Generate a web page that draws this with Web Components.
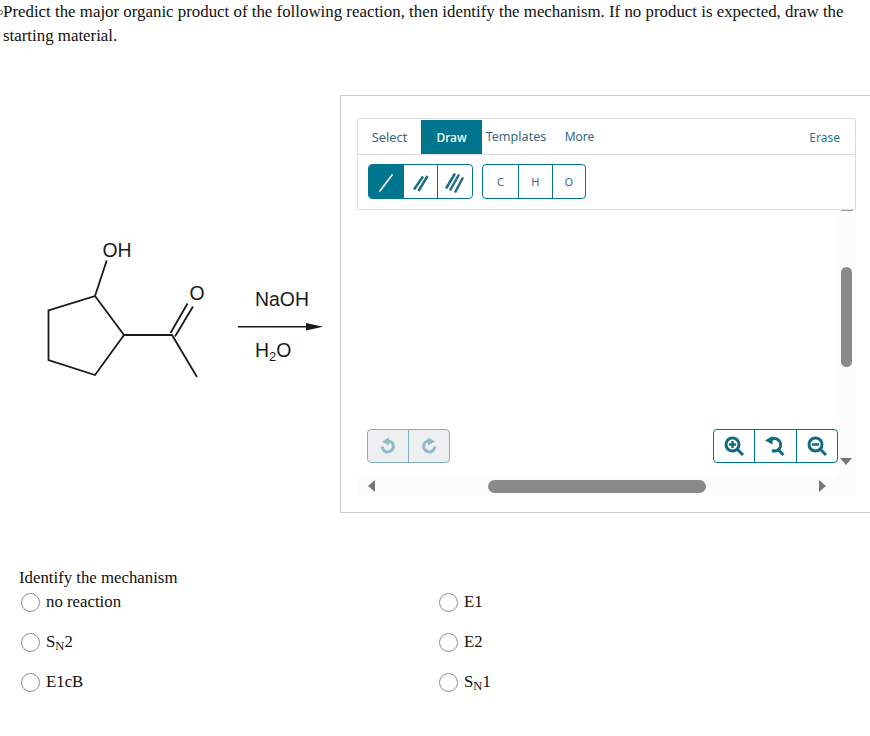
<!DOCTYPE html>
<html>
<head>
<meta charset="utf-8">
<title>Predict the product</title>
<style>
html,body{margin:0;padding:0;background:#fff;overflow:hidden}
body{width:870px;height:736px;font-family:"Liberation Serif","Times New Roman",serif;color:#111}
</style>
</head>
<body>
<question-page>
  <question-prompt>Predict the major organic product of the following reaction, then identify the mechanism. If no product is expected, draw the starting material.</question-prompt>
  <div style="display:flex;margin-top:48px">
    <reaction-figure></reaction-figure>
    <sketch-tool></sketch-tool>
  </div>
  <mechanism-list label="Identify the mechanism">
    <mech-option>no reaction</mech-option>
    <mech-option>E1</mech-option>
    <mech-option>S<sub>N</sub>2</mech-option>
    <mech-option>E2</mech-option>
    <mech-option>E1cB</mech-option>
    <mech-option>S<sub>N</sub>1</mech-option>
  </mechanism-list>
</question-page>

<script>
class QuestionPage extends HTMLElement {
  connectedCallback() {
    this.attachShadow({ mode: 'open' });
    this.shadowRoot.innerHTML = `
      <style>:host{display:block;width:870px;height:736px;overflow:hidden}</style>
      <slot></slot>`;
  }
}

class QuestionPrompt extends HTMLElement {
  connectedCallback() {
    this.attachShadow({ mode: 'open' });
    this.shadowRoot.innerHTML = `
      <style>
        :host{display:block;position:relative;padding:0 20px 0 3px;font-size:16.860px;line-height:24px;height:47px}
        .dot{position:absolute;left:-2px;top:10px;width:3px;height:3px;border:1px solid #555;border-radius:50%}
      </style>
      <span class="dot"></span><slot></slot>`;
  }
}

class ReactionFigure extends HTMLElement {
  connectedCallback() {
    this.attachShadow({ mode: 'open' });
    this.shadowRoot.innerHTML = `
      <style>
        :host{display:block;flex:0 0 340px;width:340px;height:418px}
        svg{display:block}
        text{font-family:"Liberation Sans",Arial,sans-serif;font-size:19.4px;fill:#1a1a1a}
        .b{fill:none;stroke:#1a1a1a;stroke-width:1.8}
      </style>
      <svg width="340" height="418" viewBox="0 95 340 418">
        <path class="b" d="M106.7 260.5L95 296L48.5 310.500V360L95 375L124 335L95 296M124 335H172L197 377"/>
        <path class="b" d="M170.500 333L187.500 303.500M175 336.500L193 306.500"/>
        <text x="117" y="256.500" text-anchor="middle">OH</text>
        <text x="197" y="299.500" text-anchor="middle">O</text>
        <text x="282" y="306" text-anchor="middle">NaOH</text>
        <text x="255" y="357">H<tspan font-size="13" dy="4">2</tspan><tspan dy="-4">O</tspan></text>
        <path d="M238 326.800H310" stroke="#1a1a1a" stroke-width="1.600" fill="none"/>
        <path d="M306 323L323 326.800L306 330.500Z" fill="#1a1a1a"/>
      </svg>`;
  }
}

class SketchTool extends HTMLElement {
  connectedCallback() {
    this.attachShadow({ mode: 'open' });
    this.shadowRoot.innerHTML = `
      <style>
        :host{display:block;flex:0 0 530px;width:530px;height:418px;box-sizing:border-box;
          border:1px solid #ccc;border-right:0;padding:22px 14px 16px 16px;
          font-family:"Noto Sans","Open Sans",sans-serif;color:#38687c}
        .toolbar{width:499px;box-sizing:border-box;border:1px solid #ddd;border-radius:3px 3px 0 0}
        .tabs{display:flex;align-items:stretch;height:35px;font-size:12px;border-bottom:1px solid #ddd;box-sizing:content-box}
        .tab{display:flex;align-items:center;justify-content:center}
        .select{width:63px;padding-top:1px;font-size:12.800px}
        .draw{width:61px;height:34px;margin-top:1px;background:#00758e;color:#fff;font-weight:500}
        .templates{width:68px;font-size:12.600px}
        .more{width:37px;margin-left:11px}
        .erase{margin-left:auto;margin-right:15px;padding-top:1px;color:#1a7b90}
        .tools{display:flex;gap:9px;height:54px;padding:9px 10px 0;box-sizing:border-box}
        .group{display:flex;height:35px;box-sizing:border-box;border:1px solid #00758e;border-radius:4px;overflow:hidden;background:#fff}
        .bonds{width:105px}
        .atoms{width:104px}
        .btn{flex:1 1 0;min-width:0;display:flex;align-items:center;justify-content:center;font-size:11px;color:#38687c;border-left:1px solid #00758e}
        .btn:first-child{border-left:0}
        .atoms .btn:first-child{flex:0 0 35px}
        .btn.on{background:#00758e}
        .area{display:grid;grid-template-columns:481px 18px;grid-template-rows:267px 19px;width:499px}
        .canvas{display:flex;align-items:flex-end;justify-content:space-between;padding:0 0 14px 10px;box-sizing:border-box}
        .canvas .group{height:34px}
        .undo{width:83px;border-color:#7fb0bc;background:#edeff0}
        .undo .btn{border-color:#7fb0bc}
        .zoom{width:125px}
        .vbar,.hbar{background:#fcfcfc;position:relative}
        .hbar{grid-column:1 / 3}
        .vthumb{position:absolute;left:3px;top:57px;width:11px;height:100px;border-radius:6px;background:#8a8a8a}
        .vtop{position:absolute;left:3px;top:0;width:12px;height:1px;background:#999}
        .vdown{position:absolute;left:2px;top:248px;width:0;height:0;border:6.500px solid transparent;border-top:7px solid #777;border-bottom:0}
        .hthumb{position:absolute;left:131px;top:3px;width:218px;height:13px;border-radius:7px;background:#8a8a8a}
        .hleft{position:absolute;left:11px;top:3px;width:0;height:0;border:6.500px solid transparent;border-right:7px solid #777;border-left:0}
        .hright{position:absolute;left:462px;top:3px;width:0;height:0;border:6.500px solid transparent;border-left:7px solid #777;border-right:0}
        svg{display:block}
      </style>
      <div class="toolbar">
        <div class="tabs">
          <div class="tab select">Select</div>
          <div class="tab draw">Draw</div>
          <div class="tab templates">Templates</div>
          <div class="tab more">More</div>
          <div class="tab erase">Erase</div>
        </div>
        <div class="tools">
          <div class="group bonds">
            <div class="btn on"><svg width="24" height="24" viewBox="0 0 24 24"><path d="M5.500 21.500L18.500 4.500" stroke="#fff" stroke-width="1.600"/></svg></div>
            <div class="btn"><svg width="24" height="24" viewBox="0 0 24 24"><path d="M5 19.500L14 6.500M9.500 21L18.500 6" stroke="#1f6f84" stroke-width="2.500"/></svg></div>
            <div class="btn"><svg width="24" height="24" viewBox="0 0 24 24"><path d="M3 18.500L12 3.500M7 20.500L16 4.500M12 22.500L20 7.500" stroke="#1f6f84" stroke-width="2.500"/></svg></div>
          </div>
          <div class="group atoms">
            <div class="btn">C</div>
            <div class="btn">H</div>
            <div class="btn">O</div>
          </div>
        </div>
      </div>
      <div class="area">
        <div class="canvas">
          <div class="group undo">
            <div class="btn"><svg width="18" height="18" viewBox="0 0 18 18"><path d="M6 4.500A5.600 5.600 0 1 1 3.200 9.500" fill="none" stroke="#8fbac6" stroke-width="3"/><path d="M10 0.500V8.500L3 4.500Z" fill="#8fbac6"/></svg></div>
            <div class="btn"><svg width="18" height="18" viewBox="0 0 18 18"><path d="M12 4.500A5.600 5.600 0 1 0 14.800 9.500" fill="none" stroke="#8fbac6" stroke-width="3"/><path d="M8 0.500V8.500L15 4.500Z" fill="#8fbac6"/></svg></div>
          </div>
          <div class="group zoom">
            <div class="btn"><svg width="22" height="22" viewBox="0 0 22 22"><circle cx="9.500" cy="9.500" r="6.500" fill="none" stroke="#0f6b80" stroke-width="3"/><path d="M14.500 14.500L20 20" stroke="#0f6b80" stroke-width="3"/><path d="M6 9.500H13M9.500 6V13" stroke="#0f6b80" stroke-width="2.400"/></svg></div>
            <div class="btn"><svg width="22" height="22" viewBox="0 0 22 22"><path d="M6.500 5A6.200 6.200 0 1 1 8 15.500" fill="none" stroke="#0f6b80" stroke-width="3"/><path d="M14 14.500L19.500 20" stroke="#0f6b80" stroke-width="3"/><path d="M8.500 1V9.500L1 5.500Z" fill="#0f6b80"/></svg></div>
            <div class="btn"><svg width="22" height="22" viewBox="0 0 22 22"><circle cx="9.500" cy="9.500" r="6.500" fill="none" stroke="#0f6b80" stroke-width="3"/><path d="M14.500 14.500L20 20" stroke="#0f6b80" stroke-width="3"/><path d="M6 9.500H13" stroke="#0f6b80" stroke-width="2.400"/></svg></div>
          </div>
        </div>
        <div class="vbar"><div class="vtop"></div><div class="vthumb"></div><div class="vdown"></div></div>
        <div class="hbar"><div class="hleft"></div><div class="hthumb"></div><div class="hright"></div></div>
      </div>`;
  }
}

class MechanismList extends HTMLElement {
  connectedCallback() {
    this.attachShadow({ mode: 'open' });
    this.shadowRoot.innerHTML = `
      <style>
        :host{display:block;padding:54px 0 0 19px;font-size:16.800px}
        .label{line-height:22px;height:14px}
        .grid{display:grid;grid-template-columns:418px 200px;grid-auto-rows:40px;padding-left:2px;margin-top:11px}
      </style>
      <div class="label">${this.getAttribute('label')}</div>
      <div class="grid"><slot></slot></div>`;
  }
}

class MechOption extends HTMLElement {
  connectedCallback() {
    this.attachShadow({ mode: 'open' });
    this.shadowRoot.innerHTML = `
      <style>
        :host{display:flex;align-items:center;gap:6px;height:20px;line-height:20px;font-size:16.800px}
        .radio{flex:none;width:19px;height:19px;box-sizing:border-box;border:1px solid #8f8f8f;border-radius:50%;background:#fff}
        ::slotted(sub){font-size:12.500px;line-height:0;vertical-align:-3px}
      </style>
      <span class="radio"></span><span><slot></slot></span>`;
  }
}

customElements.define('question-page', QuestionPage);
customElements.define('question-prompt', QuestionPrompt);
customElements.define('reaction-figure', ReactionFigure);
customElements.define('sketch-tool', SketchTool);
customElements.define('mechanism-list', MechanismList);
customElements.define('mech-option', MechOption);
</script>
</body>
</html>
